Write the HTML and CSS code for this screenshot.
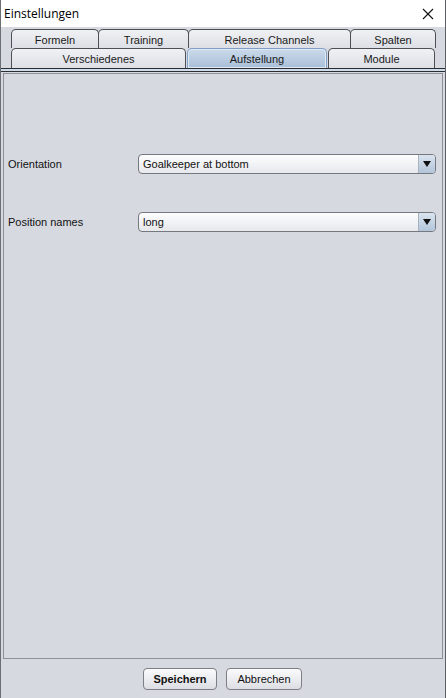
FILE: index.html
```html
<!DOCTYPE html>
<html>
<head>
<meta charset="utf-8">
<link rel="stylesheet" href="styles.css">
</head>
<body>
<div class="window">
  <div class="titlebar">
    <span class="title">Einstellungen</span>
    <svg class="close" width="12" height="12" viewBox="0 0 12 12"><path d="M1 1 L11 11 M11 1 L1 11" stroke="#111" stroke-width="1.1" fill="none"/></svg>
  </div>
  <div class="tabs">
    <div class="tabrow row1">
      <div class="tab w-formeln">Formeln</div>
      <div class="tab w-training">Training</div>
      <div class="tab w-release">Release Channels</div>
      <div class="tab w-spalten">Spalten</div>
    </div>
    <div class="tabrow row2">
      <div class="tab w-versch">Verschiedenes</div>
      <div class="tab selected w-aufst">Aufstellung</div>
      <div class="tab w-module">Module</div>
    </div>
  </div>
  <div class="tabline"></div>
  <div class="body">
    <div class="panel">
      <div class="row">
        <span class="label">Orientation</span>
        <div class="combo"><span class="value">Goalkeeper at bottom</span><span class="arrow"><svg width="8" height="6" viewBox="0 0 8 6"><path d="M0 0 H8 L4 6 Z" fill="#111"/></svg></span></div>
      </div>
      <div class="row second">
        <span class="label">Position names</span>
        <div class="combo"><span class="value">long</span><span class="arrow"><svg width="8" height="6" viewBox="0 0 8 6"><path d="M0 0 H8 L4 6 Z" fill="#111"/></svg></span></div>
      </div>
    </div>
    <div class="buttons">
      <button class="btn primary">Speichern</button>
      <button class="btn">Abbrechen</button>
    </div>
  </div>
</div>
</body>
</html>
```

FILE: styles.css
```css
html, body {
  margin: 0;
  padding: 0;
  background: #d6d9e0;
}
.window {
  width: 446px;
  height: 698px;
  box-sizing: border-box;
  border-left: 1px solid #6b6e72;
  border-right: 1px solid #5c5f63;
  background: #d6d9e0;
  font-family: "Liberation Sans", Arial, sans-serif;
  font-size: 11px;
  color: #111;
  display: flex;
  flex-direction: column;
}
.titlebar {
  height: 27px;
  background: #ffffff;
  display: flex;
  align-items: center;
  justify-content: space-between;
  padding: 0 11px 0 3px;
  flex: none;
}
.title {
  font-family: "Open Sans", "Noto Sans", sans-serif;
  font-size: 12px;
  color: #000;
  margin-top: -1px;
}
.close {
  display: block;
}
.tabs {
  padding: 2px 0 0 10px;
  height: 39px;
  flex: none;
}
.tabrow {
  display: flex;
}
.row1 {
  height: 19px;
}
.row2 {
  height: 20px;
  gap: 1px;
}
.tab {
  box-sizing: border-box;
  border: 1px solid #4d4f53;
  border-bottom: none;
  border-radius: 5px 5px 0 0;
  background: linear-gradient(#f0f1f4, #dcdfe5);
  display: flex;
  align-items: center;
  justify-content: center;
  color: #1a1a1a;
  font-size: 11px;
}
.row1 .tab {
  height: 19px;
  padding-top: 1px;
}
.row1 .tab + .tab {
  margin-left: -1px;
}
.row2 .tab {
  height: 20px;
}
.tab.selected {
  background: linear-gradient(#cbdaeb, #a9bfd8);
  border: 1px solid #7f9fc6;
  border-bottom: none;
  box-shadow: inset 0 0 0 1px #dfe9f4;
}
.w-formeln { width: 88px; }
.w-training { width: 91px; }
.w-release { width: 163px; }
.w-spalten { width: 86px; }
.w-versch { width: 175px; }
.w-aufst { width: 140px; }
.w-module { width: 107px; }
.tabline {
  height: 2px;
  border-top: 1px solid #2b2d30;
  border-bottom: 1px solid #2b2d30;
  background: #cfdcec;
  flex: none;
}
.body {
  flex: 1;
  display: flex;
  flex-direction: column;
  padding: 1px 2px 0 2px;
}
.panel {
  height: 586px;
  box-sizing: border-box;
  border: 1px solid #8e9096;
  padding: 80px 6px 0 4px;
  flex: none;
}
.row {
  display: flex;
  align-items: center;
  height: 20px;
}
.row.second {
  margin-top: 38px;
}
.label {
  width: 130px;
  flex: none;
}
.combo {
  flex: 1;
  height: 20px;
  box-sizing: border-box;
  border: 1px solid #75787f;
  border-radius: 4px;
  background: linear-gradient(#fdfdfe, #e6e8ec);
  display: flex;
  align-items: stretch;
  overflow: hidden;
}
.value {
  flex: 1;
  display: flex;
  align-items: center;
  padding-left: 4px;
}
.arrow {
  width: 16px;
  border-left: 1px solid #a7b2c0;
  background: linear-gradient(#dae4ef, #b3c5da);
  display: flex;
  align-items: center;
  justify-content: center;
}
.buttons {
  display: flex;
  justify-content: center;
  gap: 9px;
  padding-top: 9px;
  padding-right: 1px;
}
.btn {
  height: 22px;
  box-sizing: border-box;
  border: 1px solid #7d7f84;
  border-radius: 4px;
  background: linear-gradient(#fbfbfc, #dcdee3);
  font-family: "Liberation Sans", Arial, sans-serif;
  font-size: 11px;
  color: #111;
  padding: 0;
  margin: 0;
}
.primary {
  width: 74px;
  font-weight: bold;
}
.btn + .btn {
  width: 76px;
}
```
